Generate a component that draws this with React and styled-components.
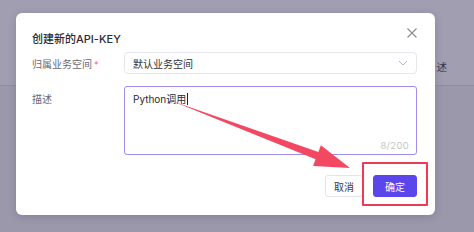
import React from "react";
import styled, { createGlobalStyle } from "styled-components";

const GlobalStyle = createGlobalStyle`
  html, body {
    margin: 0;
    padding: 0;
  }
  body {
    font-family: "Inter", "Noto Sans CJK SC", sans-serif;
  }
`;

const Page = styled.div`
  position: relative;
  width: 474px;
  height: 232px;
  overflow: hidden;
  background: #9b98ab;
`;

const BackHeader = styled.div`
  height: 86px;
  background: #a19eb1;
  border-bottom: 1px solid #908da1;
  display: flex;
  justify-content: flex-end;
  align-items: flex-start;
  padding-top: 59px;
  box-sizing: border-box;
  padding-right: 27px;
  font-size: 10.5px;
  color: #3a3850;
`;

const Modal = styled.div`
  position: absolute;
  left: 16px;
  top: 13px;
  width: 419px;
  height: 202px;
  box-sizing: border-box;
  background: #fff;
  border-radius: 6px;
  box-shadow: 0 2px 8px rgba(40, 36, 70, 0.18);
  padding: 18px 18px 0 16px;
  display: flex;
  flex-direction: column;
`;

const Header = styled.div`
  display: flex;
  justify-content: space-between;
  align-items: flex-start;
  height: 16px;
  margin-bottom: 5px;
`;

const Title = styled.div`
  font-size: 11px;
  line-height: 16px;
  font-weight: 500;
  color: #2b2b33;
`;

const Close = styled.button`
  border: 0;
  background: none;
  padding: 0;
  width: 12px;
  height: 12px;
  margin-top: -4px;
  margin-right: -1px;
  display: flex;
  cursor: pointer;
`;

const Row = styled.div`
  display: flex;
  align-items: ${(p) => (p.$top ? "flex-start" : "center")};
  margin-bottom: 12px;
`;

const Label = styled.div`
  width: 92px;
  flex: none;
  font-size: 10px;
  color: #6a6974;
  padding-top: ${(p) => (p.$top ? "5px" : "0")};
  span {
    color: #f0667e;
    font-size: 9px;
    margin-left: 2px;
  }
`;

const Select = styled.div`
  flex: 1;
  height: 22px;
  box-sizing: border-box;
  border: 1px solid #e6e6ec;
  border-radius: 4px;
  display: flex;
  align-items: center;
  justify-content: space-between;
  padding: 0 8px 0 8px;
  font-size: 10px;
  color: #2f2f38;
`;

const TextArea = styled.div`
  position: relative;
  flex: 1;
  height: 69px;
  box-sizing: border-box;
  border: 1px solid #9d8ef0;
  border-radius: 3px;
  padding: 4px 8px;
  font-size: 10px;
  color: #2a2a33;
`;

const Caret = styled.span`
  display: inline-block;
  width: 1px;
  height: 12px;
  background: #222;
  vertical-align: -2px;
  margin-left: 1px;
`;

const Counter = styled.div`
  position: absolute;
  right: 7px;
  bottom: 3px;
  font-size: 9.5px;
  letter-spacing: 0.3px;
  color: #c4c4cc;
`;

const Footer = styled.div`
  display: flex;
  justify-content: flex-end;
  gap: 10px;
  margin-top: 8px;
`;

const Button = styled.button`
  height: 22px;
  padding: 0;
  width: ${(p) => (p.$primary ? "44px" : "38px")};
  border-radius: 3px;
  border: 1px solid ${(p) => (p.$primary ? "#5b46ec" : "#e3e3ea")};
  background: ${(p) => (p.$primary ? "#5b46ec" : "#fff")};
  color: ${(p) => (p.$primary ? "#fff" : "#3a3a44")};
  font-family: inherit;
  font-size: 10px;
`;

const Highlight = styled.div`
  position: absolute;
  left: 346px;
  top: 149px;
  width: 66px;
  height: 44px;
  box-sizing: border-box;
  border: 2px solid #ee3a52;
  border-radius: 1px;
  pointer-events: none;
`;

const Arrow = styled.svg`
  position: absolute;
  left: 0;
  top: 0;
  pointer-events: none;
`;

export default function App() {
  return (
    <>
      <GlobalStyle />
      <Page>
        <BackHeader>述</BackHeader>
        <Modal>
          <Header>
            <Title>创建新的API-KEY</Title>
            <Close aria-label="close">
              <svg width="12" height="12" viewBox="0 0 12 12">
                <path d="M1.5 1.5l9 9M10.5 1.5l-9 9" stroke="#8a8a94" strokeWidth="1.1" />
              </svg>
            </Close>
          </Header>
          <Row>
            <Label>
              归属业务空间<span>*</span>
            </Label>
            <Select>
              默认业务空间
              <svg width="10" height="6" viewBox="0 0 10 6">
                <path d="M1 1l4 4 4-4" fill="none" stroke="#b4b4bd" strokeWidth="1" />
              </svg>
            </Select>
          </Row>
          <Row $top>
            <Label $top>描述</Label>
            <TextArea>
              Python调用
              <Caret />
              <Counter>8/200</Counter>
            </TextArea>
          </Row>
          <Footer>
            <Button>取消</Button>
            <Button $primary>确定</Button>
          </Footer>
          <Highlight />
        </Modal>
        <Arrow width="474" height="232" viewBox="0 0 474 232">
          <polygon
            points="172,101 318.4,151.9 320.9,145.3 350,168 313.1,165.9 315.6,159.3"
            fill="#f24862"
          />
        </Arrow>
      </Page>
    </>
  );
}
